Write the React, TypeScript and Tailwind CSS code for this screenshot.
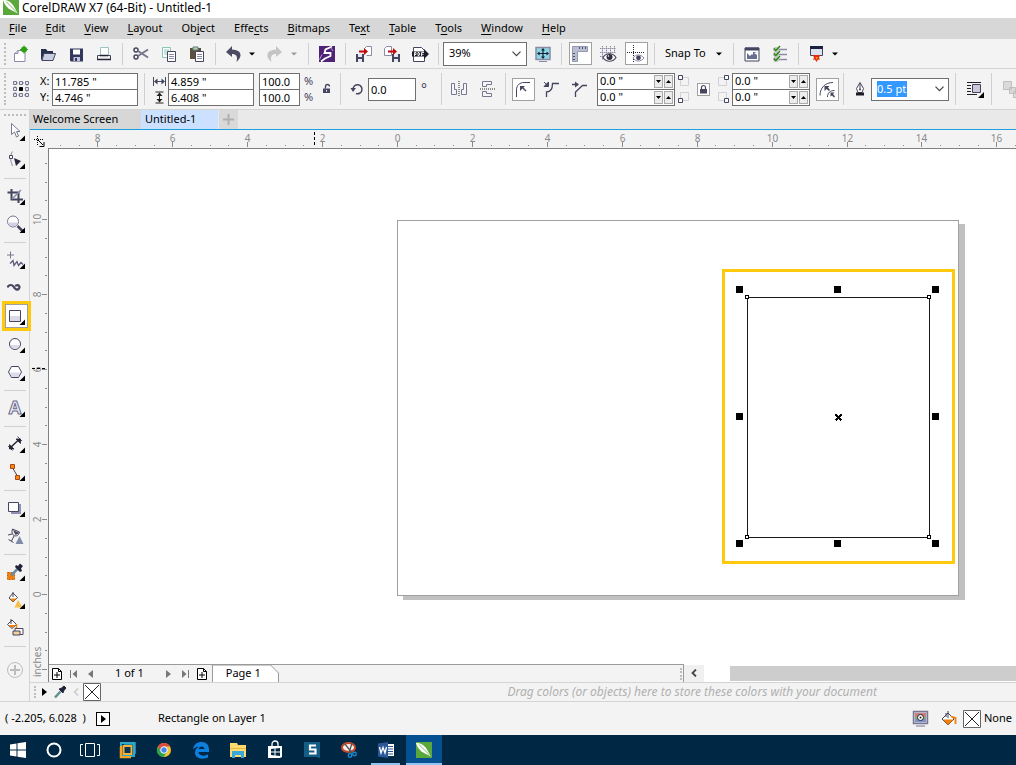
import type { ReactNode } from 'react';

const INK = '#45455f';
const GREY = '#8b8ba6';
const LIGHT = '#d9d9e6';

function Svg({ size = 20, children }: { size?: number; children: ReactNode }) {
  return (
    <svg width={size} height={size} viewBox={`0 0 ${size} ${size}`} fill="none" className="shrink-0 overflow-visible" aria-hidden="true">
      {children}
    </svg>
  );
}

function Btn({ label, framed, children }: { label: string; framed?: boolean; children: ReactNode }) {
  return (
    <button type="button" aria-label={label} className="flex h-7 w-7 shrink-0 items-center justify-center">
      {framed ? (
        <span className="flex h-[23px] w-[23px] items-center justify-center border border-[#a0a0a0] bg-white">{children}</span>
      ) : children}
    </button>
  );
}

function Caret({ color = '#000', label }: { color?: string; label: string }) {
  return (
    <button type="button" aria-label={label} className="flex h-7 w-2 shrink-0 items-center justify-center">
      <svg width="6" height="4" viewBox="0 0 6 4" className="shrink-0"><path d="M0 0.5h6L3 3.5z" fill={color} /></svg>
    </button>
  );
}

const Sep = () => <div className="mx-1 h-[22px] w-px shrink-0 bg-[#d0d0d0]" />;
const TallSep = () => <div className="h-8 w-px shrink-0 bg-[#d0d0d0]" />;
const ToolSep = () => <div className="mt-1 mb-[3px] ml-1 h-px w-[22px] shrink-0 bg-[#d0d0d0]" />;
const Grip = ({ h }: { h: string }) => <div className={`w-0.5 shrink-0 border-l-2 border-dotted border-[#bdbdbd] ${h}`} />;

function Chevron() {
  return (
    <svg width="9" height="6" viewBox="0 0 9 6" fill="none" className="pointer-events-none shrink-0">
      <path d="M0.5 0.7l4 4 4-4" stroke="#444" strokeWidth="1.2" />
    </svg>
  );
}

function Field({ label, value, width }: { label: string; value: string; width: string }) {
  return (
    <input
      aria-label={label}
      defaultValue={value}
      className={`-mt-px block h-[17px] shrink-0 border border-[#707070] bg-white px-[2px] text-[11px] leading-[15px] outline-none first:mt-0 ${width}`}
    />
  );
}

function Spinner({ label, value }: { label: string; value: string }) {
  return (
    <div className="-mt-px flex h-[17px] w-[78px] items-center border border-[#707070] bg-white first:mt-0">
      <input aria-label={label} defaultValue={value} className="h-[15px] min-w-0 flex-1 bg-transparent px-[2px] text-[11px] outline-none" />
      <button type="button" aria-label={`Decrease ${label}`} className="flex h-[13px] w-[9px] items-center justify-center border border-[#aaa] bg-[#ececec]">
        <svg width="5" height="3" viewBox="0 0 5 3" className="shrink-0"><path d="M0 0h5L2.5 3z" fill="#000" /></svg>
      </button>
      <button type="button" aria-label={`Increase ${label}`} className="mr-px ml-px flex h-[13px] w-[9px] items-center justify-center border border-[#aaa] bg-[#ececec]">
        <svg width="5" height="3" viewBox="0 0 5 3" className="shrink-0"><path d="M0 3h5L2.5 0z" fill="#000" /></svg>
      </button>
    </div>
  );
}

const CorelLogo = ({ size = 16 }: { size?: number }) => (
  <svg width={size} height={size} viewBox="0 0 16 16" className="shrink-0" aria-hidden="true">
    <path d="M0 0h16v16H0z" fill="#5aa83b" />
    <path d="M0 1C3 0.500 7 2 10 6l5 8.500L8 11C4 9 1 5 0 1z" fill="#fff" />
    <path d="M3 2.500L14 13.500" stroke="#5aa83b" strokeWidth="0.800" />
  </svg>
);

const MENUS: [string, string, string][] = [
  ['', 'F', 'ile'], ['', 'E', 'dit'], ['', 'V', 'iew'], ['', 'L', 'ayout'], ['Ob', 'j', 'ect'], ['Effe', 'c', 'ts'],
  ['', 'B', 'itmaps'], ['Te', 'x', 't'], ['', 'T', 'able'], ['T', 'o', 'ols'], ['', 'W', 'indow'], ['', 'H', 'elp'],
];

function TitleAndMenu() {
  return (
    <header>
      <div className="flex h-[18px] items-start bg-white pl-[3px]">
        <div className="-mt-px"><CorelLogo /></div>
        <h1 className="pl-[3px] text-[12px] leading-4">CorelDRAW X7 (64-Bit) - Untitled-1</h1>
      </div>
      <nav className="flex h-[21px] items-center bg-[#d7d7d7]">
        {MENUS.map(([pre, key, post]) => (
          <button key={pre + key + post} type="button" className="h-[21px] pr-[10px] pl-[9px] text-[11px]">
            {pre}<span className="underline underline-offset-2">{key}</span>{post}
          </button>
        ))}
      </nav>
    </header>
  );
}

function StandardBar() {
  return (
    <div className="flex h-[30px] items-center overflow-hidden border-b border-[#d4d4d4] pl-1">
      <Grip h="h-[22px]" />
      <Btn label="New">
        <Svg>
          <path d="M8 6.500h7v11H4.500v-8z" fill="#fff" stroke={GREY} />
          <path d="M4.500 9.500H8v-3" fill={LIGHT} stroke={GREY} />
          <circle cx="14" cy="5.500" r="3" fill="#2fa012" />
          <path d="M14 1.500v8M10 5.500h8" stroke="#2fa012" />
        </Svg>
      </Btn>
      <Btn label="Open">
        <Svg>
          <path d="M3 17V5h5l1.500 2H15v3H6z" fill="#25304d" />
          <path d="M6 9.500h11.500L15 16.500H4z" fill="#c9cfe0" stroke={INK} />
        </Svg>
      </Btn>
      <Btn label="Save">
        <Svg>
          <path d="M4 4.500h13v13H5l-1-1z" fill="#34375c" />
          <path d="M7 5.500h7v5H7z" fill="#fff" />
          <path d="M7.500 13h6.500v4H7.500z" fill="#bfc6dd" />
          <path d="M9 14h2v3H9z" fill="#34375c" />
        </Svg>
      </Btn>
      <Btn label="Print">
        <Svg>
          <path d="M6.500 3.500h8v9h-8z" fill="#fff" stroke="#9cc3c3" />
          <path d="M3.500 11.500h13v4h-13z" fill="#eee" stroke={INK} />
          <path d="M3 15.500h14M6 11.500h8" stroke="#25253a" strokeWidth="1.500" />
        </Svg>
      </Btn>
      <Sep />
      <Btn label="Cut">
        <Svg>
          <circle cx="5" cy="6" r="2" stroke={INK} strokeWidth="1.500" />
          <circle cx="5" cy="13" r="2" stroke={INK} strokeWidth="1.500" />
          <path d="M7 7l10 6.500M7 12l10-6.500" stroke="#77778c" strokeWidth="2" />
        </Svg>
      </Btn>
      <Btn label="Copy">
        <Svg>
          <path d="M3.500 3.500h8v10h-8z" fill="#fff" stroke="#8cc5b9" />
          <path d="M5 6h5M5 8h5M5 10h5" stroke="#8cc5b9" />
          <path d="M8.500 7.500h8v10h-8z" fill="#fff" stroke={INK} />
          <path d="M10 10.500h5M10 12.500h5M10 14.500h5" stroke={GREY} />
        </Svg>
      </Btn>
      <Btn label="Paste">
        <Svg>
          <path d="M3 4h11v11H3z" fill="#5d4f3d" />
          <path d="M6 3h5v3H6z" fill="#a9d2c6" stroke="#6b7f6c" />
          <path d="M8.500 7.500h8v10h-8z" fill="#fff" stroke={INK} />
          <path d="M10 10.500h5M10 12.500h5M10 14.500h5" stroke={GREY} />
        </Svg>
      </Btn>
      <Sep />
      <Btn label="Undo">
        <Svg>
          <path d="M8 2L2 8l6 5V10c4 0 6 2 4.500 8 6-5 6-12-4.500-12.500z" fill="#4b4b63" />
        </Svg>
      </Btn>
      <Caret label="Undo list" />
      <div className="w-1 shrink-0" />
      <Btn label="Redo">
        <Svg>
          <path d="M12 2l6 6-6 5V10c-4 0-6 2-4.500 8-6-5-6-12 4.500-12.500z" fill="#c4c4c4" />
        </Svg>
      </Btn>
      <div className="w-0.5 shrink-0" />
      <Caret label="Redo list" color="#999" />
      <div className="w-1.5 shrink-0" />
      <Sep />
      <Btn label="Search content">
        <Svg>
          <path d="M2 2h16v16H2z" fill="#4d2277" />
          <path d="M15 2.500L8.500 5.500 7.500 9h6v3l-5.500 2.500-4 3" stroke="#fff" strokeWidth="1.800" />
          <path d="M5 10.500l-2.500 5M14 4l2 3" stroke="#b79ad0" />
        </Svg>
      </Btn>
      <Sep />
      <Btn label="Import">
        <Svg>
          <path d="M10.500 8V4.500l2-2h5v9h-5" fill="#fff" stroke={GREY} />
          <path d="M2 10h8v8H2z" fill={INK} /><path d="M4 10h4v3H4zM4 15h4v3H4z" fill="#e8e8f3" />
          <path d="M5 6.500h5V4l4 3.500-4 3.500V8.500H5z" fill="#c00a0a" />
        </Svg>
      </Btn>
      <Btn label="Export">
        <Svg>
          <path d="M2.500 11.500v-7l2-2h5v9z" fill="#fff" stroke={GREY} />
          <path d="M10 10h8v8h-8z" fill={INK} /><path d="M12 10h4v3h-4zM12 15h4v3h-4z" fill="#e8e8f3" />
          <path d="M6 6.500h5V4l4 3.500-4 3.500V8.500H6z" fill="#c00a0a" />
        </Svg>
      </Btn>
      <Btn label="Publish to PDF">
        <Svg>
          <path d="M3.500 17.500v-14h8l3 3v11z" fill="#fff" stroke={INK} />
          <path d="M2 7.500h12V5l5 5-5 5v-2.500H2z" fill="#1d1d26" />
          <path d="M4.500 12V8.500h1.500v2H4.500M8 8.500v3h1l.8-1.500L9 8.500zM11.500 12V8.500H14M11.500 10.300h2" stroke="#fff" strokeWidth="0.900" />
        </Svg>
      </Btn>
      <Sep />
      <div className="flex h-6 w-[84px] shrink-0 items-center border border-[#707070] bg-white pr-[5px]">
        <select aria-label="Zoom levels" className="h-[22px] min-w-0 flex-1 appearance-none bg-transparent pl-[5px] text-[11px] outline-none">
          <option>39%</option>
        </select>
        <Chevron />
      </div>
      <div className="w-0.5 shrink-0" />
      <Btn label="Full-screen preview">
        <Svg>
          <path d="M3 3.500h14v12H3z" fill="#8fd5e8" stroke={GREY} strokeWidth="1.500" />
          <path d="M10 5v9M5 9.500h10" stroke="#14232f" strokeWidth="1.200" />
          <path d="M8 6.500L10 4l2 2.500zM8 12.500l2 2.500 2-2.500zM6.500 7.500L4 9.500l2.500 2zM13.500 7.500l2.500 2-2.500 2z" fill="#14232f" />
          <path d="M6 17.500h8" stroke={GREY} />
        </Svg>
      </Btn>
      <Sep />
      <Btn label="Show rulers" framed>
        <Svg size={18}>
          <path d="M1.500 1.500h15v5h-10v10h-5z" fill="#b9bfd0" stroke="#9299b0" />
          <path d="M8.500 2v2M11.500 2v2M14.500 2v2M2 8.500h2M2 11.500h2M2 14.500h2" stroke="#4f566f" />
        </Svg>
      </Btn>
      <Btn label="Show grid">
        <Svg>
          <path d="M4.500 2v14M8.500 2v14M12.500 2v10M16.500 2v6M2 4.500h16M2 8.500h16M2 12.500h6" stroke={GREY} strokeDasharray="1.500 0.500" />
          <path d="M5 13.500c3-5 10-5 13 0-3 5-10 5-13 0z" fill="#fff" stroke={INK} strokeWidth="1.200" />
          <circle cx="11.500" cy="13" r="3" fill="#2d2d3b" /><circle cx="10.500" cy="12" r="0.800" fill="#fff" />
        </Svg>
      </Btn>
      <Btn label="Show guidelines" framed>
        <Svg size={18}>
          <path d="M6.500 0v18M0 7.500h18" stroke="#222" strokeDasharray="1 1" />
          <path d="M6 13c2.500-4 8-4 11 0-3 4-8.500 4-11 0z" fill="#fff" stroke={GREY} />
          <circle cx="11.500" cy="12.800" r="2.400" fill={INK} />
        </Svg>
      </Btn>
      <Sep />
      <button type="button" className="shrink-0 px-[6px] text-[11px]">Snap To</button>
      <div className="w-[3px] shrink-0" />
      <Caret label="Snap options" />
      <div className="w-[6px] shrink-0" />
      <Sep />
      <Btn label="Welcome screen">
        <Svg>
          <path d="M3 4h14v13H3z" fill="#fff" stroke={INK} /><path d="M3 3.500h14v3H3z" fill={INK} />
          <path d="M5 9l3 3 2-2 1 1V8h4v7H5z" fill="#6a6f92" /><path d="M12 9l3-1v3z" fill="#fff" />
        </Svg>
      </Btn>
      <Btn label="Options">
        <Svg>
          <path d="M9 5.500h8M9 10.500h8M9 15.500h8" stroke={GREY} strokeWidth="1.400" />
          <path d="M4 4h4v3H4zM4 9h4v3H4zM4 14h4v3H4z" fill="#fff" stroke="#9aa09a" />
          <path d="M4 4.500l1.800 2L10 2M4 9.500l1.800 2L10 7M4 14.500l1.800 2L10 12" stroke="#27830c" strokeWidth="1.400" />
        </Svg>
      </Btn>
      <Sep />
      <Btn label="Application launcher">
        <Svg>
          <path d="M3.500 2.500h12v9h-12z" fill="#dde3ee" stroke={INK} /><path d="M3 2h13v3H3z" fill="#1c2140" />
          <path d="M6 11h7l-1 3 1 2-2-.5L9.500 18 8 15.500 6 16l1-2z" fill="#e32a0e" /><path d="M8.500 13h2l-.8 3z" fill="#ffb300" />
        </Svg>
      </Btn>
      <Caret label="Launcher list" />
    </div>
  );
}

const CornerBox = ({ x, y }: { x: number; y: number }) => (
  <Svg size={13}>
    <path d="M2.500 2.500h8v8h-8z" stroke="#d0d0d6" />
    <path d={`M${x} ${y}h4v4h-4z`} fill="#fff" stroke={INK} />
  </Svg>
);

function PropertyBar() {
  return (
    <div className="flex h-[41px] items-center overflow-hidden border-b border-[#d4d4d4] pl-1">
      <Grip h="h-8" />
      <div className="ml-[5px] flex shrink-0">
        <Svg>
          <path d="M4 4h12v12H4z" stroke={GREY} strokeDasharray="1 1" />
          {[2.5, 8.5, 14.500].map((y) => [2.5, 8.5, 14.500].map((x) => (
            <path key={`${x}-${y}`} d={`M${x} ${y}h3v3h-3z`} fill={x === 8.5 && y === 8.5 ? '#000' : '#e6e6ee'} stroke={x === 8.5 && y === 8.5 ? '#000' : '#77778f'} />
          )))}
        </Svg>
      </div>
      <div className="ml-[9px] w-3 shrink-0 text-[11px] leading-4">
        <div>X:</div>
        <div>Y:</div>
      </div>
      <div className="shrink-0">
        <Field label="X position" value={'11.785 "'} width="w-[86px]" />
        <Field label="Y position" value={'4.746 "'} width="w-[86px]" />
      </div>
      <div className="w-[6px] shrink-0" />
      <TallSep />
      <div className="ml-2 flex w-[15px] shrink-0 flex-col gap-[3px]">
        <Svg size={13}>
          <path d="M0.500 2v9M12.500 2v9M2 6.500h9" stroke={INK} />
          <path d="M1 6.500L4.500 3.500v6zM12 6.500L8.500 3.500v6z" fill={INK} />
        </Svg>
        <Svg size={13}>
          <path d="M2.500 1h8M2.500 12h8M6.500 2v9" stroke="#222" />
          <path d="M6.500 1.500L3.500 5h6zM6.500 11.500L3.500 8h6z" fill="#222" />
        </Svg>
      </div>
      <div className="shrink-0">
        <Field label="Object width" value={'4.859 "'} width="w-[86px]" />
        <Field label="Object height" value={'6.408 "'} width="w-[86px]" />
      </div>
      <div className="ml-[5px] shrink-0">
        <Field label="Horizontal scale" value="100.0" width="w-[41px]" />
        <Field label="Vertical scale" value="100.0" width="w-[41px]" />
      </div>
      <div className="ml-1 w-[14px] shrink-0 text-[11px] leading-4 text-[#45455f]">
        <div>%</div>
        <div>%</div>
      </div>
      <button type="button" aria-label="Lock ratio" className="flex w-[18px] shrink-0 justify-center">
        <Svg size={10}>
          <path d="M1 4.500h7V9H1z" fill={INK} />
          <path d="M3.500 4.500V2.500a2 2 0 0 1 4 0" stroke={INK} strokeWidth="1.300" />
          <path d="M4 6h1v1.500H4z" fill="#fff" />
        </Svg>
      </button>
      <div className="w-1 shrink-0" />
      <TallSep />
      <label htmlFor="angle" aria-label="Angle of rotation" className="mr-1 ml-[9px] shrink-0">
        <Svg size={14}>
          <path d="M3 7a4.500 4.500 0 1 1 3 4.500" stroke={INK} strokeWidth="1.500" />
          <path d="M0.500 6h5.500L3 10z" fill={INK} />
        </Svg>
      </label>
      <input id="angle" defaultValue="0.0" className="h-[23px] w-12 shrink-0 border border-[#707070] bg-white px-[2px] text-[11px] outline-none" />
      <span className="ml-[5px] w-5 shrink-0 text-[14px] leading-5 text-[#45455f]">°</span>
      <TallSep />
      <div className="w-[3px] shrink-0" />
      <Btn label="Mirror horizontally">
        <Svg>
          <path d="M2.500 4.500h3v6h2v5h-5zM17.500 4.500h-3v6h-2v5h5z" fill="#f6f6fa" stroke="#77778f" />
          <path d="M10 2v16" stroke="#222" strokeDasharray="1 1" />
        </Svg>
      </Btn>
      <Btn label="Mirror vertically">
        <Svg>
          <path d="M5.500 2.500h9v3h-5v2h-4zM5.500 17.500h9v-3h-5v-2h-4z" fill="#f6f6fa" stroke="#77778f" />
          <path d="M3 10h15" stroke="#222" strokeDasharray="1 1" />
        </Svg>
      </Btn>
      <div className="w-1 shrink-0" />
      <TallSep />
      <div className="w-[3px] shrink-0" />
      <Btn label="Round corner" framed>
        <Svg size={18}>
          <path d="M2.500 17V10C2.500 5 6 2.500 10 2.500h6" stroke={INK} />
          <path d="M6 6h5L9.500 7.500l3 3-1 1-3-3L6 11z" fill={INK} />
        </Svg>
      </Btn>
      <Btn label="Scalloped corner">
        <Svg>
          <path d="M5.500 18v-5c4 0 6-2 6-8.500H18" stroke={INK} strokeWidth="1.300" />
          <path d="M3 3l3 3M7.500 3v4.500H3z" stroke={INK} fill={INK} />
        </Svg>
      </Btn>
      <Btn label="Chamfered corner">
        <Svg>
          <path d="M6.500 18v-5l7-6.500H18M3 5.500h6" stroke={INK} strokeWidth="1.300" />
          <path d="M6 2.500l4 3-4 3z" fill={INK} />
        </Svg>
      </Btn>
      <div className="w-1 shrink-0" />
      <div className="shrink-0">
        <Spinner label="Top left radius" value={'0.0 "'} />
        <Spinner label="Bottom left radius" value={'0.0 "'} />
      </div>
      <div className="ml-[3px] flex shrink-0 flex-col gap-[2px]">
        <CornerBox x={0.5} y={0.5} />
        <CornerBox x={0.5} y={8.500} />
      </div>
      <button type="button" aria-label="Edit corners together" className="ml-[6px] flex h-[13px] w-[13px] shrink-0 items-center justify-center border border-[#a0a0a0] bg-white">
        <Svg size={9}>
          <path d="M1 4h7v4.500H1z" fill={INK} />
          <path d="M2.500 4V2.500a2 2 0 0 1 4 0V4" stroke={INK} strokeWidth="1.200" />
        </Svg>
      </button>
      <div className="ml-[6px] flex shrink-0 flex-col gap-[2px]">
        <CornerBox x={8.500} y={0.5} />
        <CornerBox x={8.500} y={8.500} />
      </div>
      <div className="ml-[3px] shrink-0">
        <Spinner label="Top right radius" value={'0.0 "'} />
        <Spinner label="Bottom right radius" value={'0.0 "'} />
      </div>
      <div className="w-[3px] shrink-0" />
      <Btn label="Relative corner scaling" framed>
        <Svg size={18}>
          <path d="M2 15.500C2 8 7 2.500 15 2.500M9.500 17c0-4 2.500-6.500 7-6.500" stroke={INK} />
          <path d="M6.500 6h5L10 7.500 12 10l-1 1-2.500-2L6.500 11zM12.500 12.500h4L15 14l2 2.500-1 1-2-2-1.500 1z" fill={INK} />
        </Svg>
      </Btn>
      <div className="w-0.5 shrink-0" />
      <TallSep />
      <label htmlFor="outline" aria-label="Outline width" className="mr-1 ml-[9px] shrink-0">
        <Svg size={14}>
          <path d="M7 0.500L3.500 6.500l1.500 4h4l1.500-4z" fill="#fff" stroke={INK} />
          <path d="M7 1v6" stroke={INK} /><circle cx="7" cy="7.500" r="1" fill={INK} />
          <path d="M3 10.500h8v3H3z" fill="#1d1d26" />
        </Svg>
      </label>
      <div className="flex h-[23px] w-[78px] shrink-0 items-center justify-between border border-[#707070] bg-white pr-1 pl-[5px]">
        <select id="outline" className="h-4 appearance-none bg-[#3399ff] text-[11px] leading-4 text-white outline-none">
          <option>0.5 pt</option>
        </select>
        <Chevron />
      </div>
      <div className="w-[6px] shrink-0" />
      <TallSep />
      <div className="w-[5px] shrink-0" />
      <Btn label="Wrap text">
        <Svg>
          <path d="M2 3.500h14M2 6.500h4M2 9.500h4M2 12.500h4M2 15.500h10" stroke="#222" />
          <path d="M7.500 5.500h8v8h-8z" fill="#c9c9dc" stroke={INK} />
          <path d="M19 13v6h-6z" fill="#000" />
        </Svg>
      </Btn>
      <div className="w-0.5 shrink-0" />
      <TallSep />
      <div className="w-[6px] shrink-0" />
      <Btn label="To front of page">
        <Svg>
          <path d="M1.500 2.500h8v8h-8zM7.500 8.500h6v6h-6zM11.500 12.500h6v6h-6z" fill="#dadada" stroke="#bfbfbf" />
        </Svg>
      </Btn>
    </div>
  );
}

const FLYOUT = <path d="M20 13.500v5.500h-5.500z" fill="#000" />;

type Tool = { label: string; icon: ReactNode; active?: boolean };

const TOOL_GROUPS: Tool[][] = [
  [
    { label: 'Pick tool', icon: <><path d="M6.500 1.500v11l3-2.500 2 5 2-1-2-4.500h3.500z" fill="#fff" stroke="#77778f" />{FLYOUT}</> },
    { label: 'Shape tool', icon: <><path d="M7.500 1.500C5 5 5 10 7.500 16" stroke={GREY} /><path d="M4.500 5.500h3v3h-3z" fill="#fff" stroke={INK} /><path d="M9 8l7 3-5 5z" fill="#25253a" />{FLYOUT}</> },
  ],
  [
    { label: 'Crop tool', icon: <><path d="M6.500 3v10.500H18M2.500 6.500h11V17" stroke={INK} strokeWidth="2" /><path d="M7 13L16 4" stroke={GREY} strokeWidth="1.500" />{FLYOUT}</> },
    { label: 'Zoom tool', icon: <><circle cx="8" cy="7.500" r="5.500" fill="#fff" stroke="#77778f" /><path d="M3 8.500h10c0 5-10 5-10 0z" fill="#cfd2e4" /><path d="M12.500 12l5 5" stroke={INK} strokeWidth="2.500" />{FLYOUT}</> },
  ],
  [
    { label: 'Freehand tool', icon: <><path d="M5.500 1.500v7M2 5h7" stroke="#77778f" /><path d="M5 13.500l3-3 1 5 3-4 1.500 4 2.500-3 2 2" stroke="#5c5c7c" strokeWidth="1.300" />{FLYOUT}</> },
    { label: 'Artistic media', icon: <path d="M3 8.500c1.500-2 4-2 5.500 0 1.500 3 4 4 5.500 2s-.5-4-3-3" stroke={INK} strokeWidth="2.200" strokeLinecap="round" /> },
    { label: 'Rectangle tool', active: true, icon: <><path d="M4.500 4.500h11v11h-11z" fill="#fff" stroke={INK} /><path d="M5 10h10v5H5z" fill="#d9dbe8" />{FLYOUT}</> },
    { label: 'Ellipse tool', icon: <><circle cx="10" cy="10" r="5.500" fill="#fff" stroke={INK} /><path d="M5.200 11h9.600c-1 4.500-8.600 4.500-9.600 0z" fill="#d9dbe8" />{FLYOUT}</> },
    { label: 'Polygon tool', icon: <><path d="M6.500 4.500h7l3 5.500-3 5.500h-7l-3-5.500z" fill="#fff" stroke={INK} /><path d="M4.500 10.500h11l-2.500 4.500H7z" fill="#d9dbe8" />{FLYOUT}</> },
  ],
  [
    { label: 'Text tool', icon: <><text x="10" y="16" textAnchor="middle" fontSize="18" fontWeight="700" fill="#eef" stroke="#6c6c86" fontFamily="Noto Sans, sans-serif">A</text>{FLYOUT}</> },
  ],
  [
    { label: 'Dimension tool', icon: <><path d="M5 14L14 5.500" stroke="#222235" strokeWidth="1.500" /><path d="M4.500 10.500v4.500H9zM11 5h4.500v4.500zM12.500 2.500l4.500 4.500M3 12l4.500 4.500" fill="#222235" stroke="#222235" strokeWidth="0.800" />{FLYOUT}</> },
    { label: 'Connector tool', icon: <><path d="M7 5l6 10" stroke={INK} /><path d="M5.500 2.500h4v4h-4zM10.500 13.500h4v4h-4z" fill="#f58a07" stroke="#b1441c" />{FLYOUT}</> },
  ],
  [
    { label: 'Drop shadow tool', icon: <><path d="M6 6h10v10H6z" fill="#8f8fb0" /><path d="M3.500 4.500h10v9h-10z" fill="#fff" stroke={INK} />{FLYOUT}</> },
    { label: 'Transparency tool', icon: <><path d="M7.500 3l7 3c-1 4-3.500 4.500-5.500 3.500S6.500 6 7.500 3zM9 10l-2.500 5M3.500 13.500l5 3M3 9l4-1" stroke={INK} /><path d="M8 4l6.500 3-4 2z" fill={INK} /><path d="M14.500 10l4 8h-8z" fill="#7d8aa8" /></> },
  ],
  [
    { label: 'Color eyedropper', icon: <><path d="M2.500 10.500h7v7h-7z" fill="#f0800a" stroke="#c85c08" strokeDasharray="2 1" /><path d="M6 13.500L12.500 7" stroke="#6d8aa0" strokeWidth="2.500" /><path d="M11 3l2 1 2-2.500 3 2.500-2 2.500L17 9l-2 1-5-5z" fill="#22223a" />{FLYOUT}</> },
    { label: 'Interactive fill', icon: <><path d="M8 3l4.500 4.500L8 12 4 8z" fill="#fff" stroke={INK} /><path d="M5 8.500h6.500L8 12z" fill="#f0800a" /><path d="M8 2v5" stroke={INK} /><path d="M13 10l4.500 7.500h-8z" fill="#f5bf4d" />{FLYOUT}</> },
    { label: 'Smart fill', icon: <><path d="M7 2l4.500 4.500L7 10.500 2.500 6.500z" fill="#fff" stroke={INK} /><path d="M3.500 7h7L7 10z" fill="#f0800a" /><path d="M6 1v5" stroke={INK} /><path d="M11.500 6v6" stroke="#f0800a" strokeWidth="1.500" /><path d="M10 10.500h8v6h-8z" fill="#fff" stroke={INK} /><path d="M8 13h7v4H8z" fill="#f5d19f" stroke={INK} /></> },
  ],
];

function Toolbox() {
  return (
    <aside className="flex w-[30px] shrink-0 flex-col border-r border-[#d4d4d4]">
      <div className="mt-1 mb-0.5 ml-1 h-0.5 w-[22px] border-t-2 border-dotted border-[#bdbdbd]" />
      {TOOL_GROUPS.map((group, i) => (
        <div key={i} className="flex flex-col">
          {group.map((tool) => (
            <button key={tool.label} type="button" aria-label={tool.label} className="relative flex h-7 w-full items-center justify-center">
              {tool.active && <span className="absolute top-0.5 right-px bottom-0.5 left-[5px] border border-[#a0a0a0] bg-white outline-[3px] outline-[#ffc90e]" />}
              <span className="relative"><Svg>{tool.icon}</Svg></span>
            </button>
          ))}
          <ToolSep />
        </div>
      ))}
      <button type="button" aria-label="Quick customize" className="flex h-10 w-full items-center justify-center">
        <Svg>
          <circle cx="10" cy="10" r="7.500" stroke="#bcbcbc" /><path d="M10 5v10M5 10h10" stroke="#bcbcbc" strokeWidth="2" />
        </Svg>
      </button>
    </aside>
  );
}

const STEP = 18.73;
const V_STEP = 18.75;

function TopRuler() {
  const zero = 348.5;
  const ticks = Array.from({ length: 52 }, (_, i) => i - 18);
  return (
    <svg className="block h-[18px] min-w-0 flex-1" aria-label="Horizontal ruler">
      {ticks.map((n) => {
        const x = Math.round(zero + n * STEP - 0.5) + 0.5;
        const major = n % 4 === 0;
        return (
          <g key={n}>
            <path d={`M${x} ${major ? 12 : 15}V${major ? 17 : 16}`} stroke="#8a8a8a" />
            {major && <text x={x} y={12} textAnchor="middle" fontSize="10" fill="#8a8a8a">{Math.abs(n / 2)}</text>}
          </g>
        );
      })}
      <path d="M265.500 2v15" stroke="#000" strokeDasharray="3 2" />
    </svg>
  );
}

function SideRuler() {
  const zero = 446;
  const ticks = Array.from({ length: 28 }, (_, i) => i - 4);
  return (
    <svg className="block w-[18px] flex-1" aria-label="Vertical ruler">
      {ticks.map((n) => {
        const y = Math.round(zero - n * V_STEP) + 0.5;
        const major = n % 4 === 0;
        return (
          <g key={n}>
            <path d={`M${major ? 12 : 15} ${y}H17`} stroke="#8a8a8a" />
            {major && n >= 0 && (
              <text transform={`translate(11 ${y}) rotate(-90)`} textAnchor="middle" fontSize="10" fill="#8a8a8a">{n / 2}</text>
            )}
          </g>
        );
      })}
      <text transform="translate(11 529) rotate(-90)" fontSize="10" fill="#8a8a8a">inches</text>
      <path d="M2 220.500h15" stroke="#000" strokeDasharray="3 2" />
    </svg>
  );
}

function DrawingWindow() {
  return (
    <div className="relative min-h-[515px] flex-1 overflow-hidden bg-white">
      <div className="absolute top-[71px] left-[348px] h-[376px] w-[562px] border border-[#a0a0a0] bg-white shadow-[6px_4px_0_#c0c0c0]" />
      <div className="absolute top-[120px] left-[673px] h-[295px] w-[233px] border-[3px] border-[#ffc90e]">
        <svg width="227" height="289" viewBox="0 0 227 289" fill="none" shapeRendering="crispEdges">
          <path d="M22.500 25.500h182v240h-182z" stroke="#1a1a1a" />
          {[11, 109, 207].map((x) => [14, 141, 268].map((y) => (
            x === 109 && y === 141 ? null : <rect key={`${x}-${y}`} x={x} y={y} width="7" height="7" fill="#000" />
          )))}
          {[21, 203].map((x) => [24, 264].map((y) => (
            <rect key={`${x}-${y}`} x={x - 0.5} y={y - 0.5} width="3" height="3" fill="#fff" stroke="#000" />
          )))}
          <path d="M110.500 142.500l6 6M116.500 142.500l-6 6" stroke="#000" strokeWidth="2" />
        </svg>
      </div>
    </div>
  );
}

const AddPage = ({ label }: { label: string }) => (
  <button type="button" aria-label={label} className="flex h-[17px] w-4 shrink-0 items-center justify-center">
    <Svg size={12}>
      <path d="M1.500 0.500h6l3 3v8h-9z" fill="#fff" stroke="#000" /><path d="M7.500 0.500v3h3M6 4v6M3 7h6" stroke="#000" />
    </Svg>
  </button>
);

function NavBtn({ label, d }: { label: string; d: string }) {
  return (
    <button type="button" aria-label={label} className="flex h-[17px] w-[17px] shrink-0 items-center justify-center">
      <Svg size={8}><path d={d} fill="#777" /></Svg>
    </button>
  );
}

function PageNavigator() {
  return (
    <div className="flex h-[18px] text-[11px]">
      <div className="flex min-w-0 flex-1 items-center border-t border-r border-[#9a9a9a]">
        <AddPage label="Add page before" />
        <NavBtn label="First page" d="M0 0h1v8H0zM7 0v8L2.500 4z" />
        <NavBtn label="Previous page" d="M6 0v8L1 4z" />
        <span className="mx-4 shrink-0">1 of 1</span>
        <NavBtn label="Next page" d="M2 0v8l5-4z" />
        <NavBtn label="Last page" d="M7 0h1v8H7zM1 0v8l4.500-4z" />
        <AddPage label="Add page after" />
        <button type="button" className="relative ml-0.5 flex h-[17px] w-[67px] shrink-0 items-center pl-[14px]">
          <svg viewBox="0 0 67 17" className="absolute inset-0 h-full w-full" fill="none">
            <path d="M0.500 17V0H58.500L66.500 8V17" fill="#fff" stroke="#9a9a9a" />
          </svg>
          <span className="relative">Page 1</span>
        </button>
        <div className="ml-auto h-3 w-[3px] border-l-2 border-dotted border-[#bdbdbd]" />
      </div>
      <div className="flex w-[332px] shrink-0 items-center bg-white">
        <button type="button" aria-label="Scroll left" className="flex h-[17px] w-[20px] items-center justify-center bg-[#f0f0f0]">
          <svg width="6" height="8" viewBox="0 0 6 8" fill="none"><path d="M5 0.500L1.500 4 5 7.500" stroke="#444" strokeWidth="1.800" /></svg>
        </button>
        <div className="ml-[26px] h-[15px] flex-1 bg-[#cdcdcd]" />
      </div>
    </div>
  );
}

const NoColor = () => (
  <svg width="18" height="18" viewBox="0 0 18 18" fill="none" className="shrink-0" aria-hidden="true">
    <path d="M0.500 0.500h17v17H0.500z" fill="#fff" stroke="#666" />
    <path d="M2 2l14 14M16 2L2 16" stroke="#222" />
  </svg>
);

function DocumentPalette() {
  return (
    <div className="flex h-[19px] items-center border-t border-[#d4d4d4] pl-1">
      <Grip h="h-3" />
      <button type="button" aria-label="Palette menu" className="flex w-4 shrink-0 items-center justify-center">
        <svg width="5" height="8" viewBox="0 0 5 8"><path d="M0 0v8l5-4z" fill="#000" /></svg>
      </button>
      <button type="button" aria-label="Pick color" className="flex w-4 shrink-0 items-center justify-center">
        <Svg size={14}>
          <path d="M2 12.500L7.500 6.500" stroke="#5f9090" strokeWidth="2.500" />
          <path d="M6 4l2-.5L11 1l2 2-2.500 3L10 8z" fill="#22223a" stroke="#22223a" />
        </Svg>
      </button>
      <button type="button" aria-label="Scroll palette" className="flex w-[15px] shrink-0 items-center justify-center">
        <svg width="6" height="8" viewBox="0 0 6 8" fill="none"><path d="M5 0.500L1.500 4 5 7.500" stroke="#ccc" strokeWidth="1.600" /></svg>
      </button>
      <NoColor />
      <p className="ml-auto truncate pr-[139px] text-[12px] leading-4 text-[#b0b0b0] italic">
        Drag colors (or objects) here to store these colors with your document
      </p>
    </div>
  );
}

function StatusBar() {
  return (
    <footer className="flex h-[33px] items-center pr-1 pl-[5px] text-[11px]">
      <span className="w-[91px] whitespace-pre">{'( -2.205, 6.028  )'}</span>
      <button type="button" aria-label="Status options" className="flex h-[14px] w-[14px] items-center justify-center border border-black bg-white">
        <svg width="5" height="8" viewBox="0 0 5 8"><path d="M0 0v8l5-4z" fill="#000" /></svg>
      </button>
      <span className="ml-12">Rectangle on Layer 1</span>
      <div className="ml-auto flex items-center">
        <Btn label="Color proofing">
          <Svg size={18}>
            <path d="M1.500 1.500h14v12h-14z" fill="#ccd" stroke="#77778f" strokeWidth="1.500" />
            <path d="M3 3h11v4H3z" fill="#c77f7f" /><path d="M3 7h11v2H3z" fill="#7fae7f" /><path d="M3 9h11v3H3z" fill="#7f94cc" />
            <circle cx="8.500" cy="7.500" r="3" fill="#fff" stroke="#222" /><circle cx="8.500" cy="7.500" r="1" fill="#222" />
            <path d="M4 16h9" stroke="#77778f" />
          </Svg>
        </Btn>
        <Btn label="Fill color">
          <Svg size={18}>
            <path d="M8 3l6 6-6 6-6-6z" fill="#fff" stroke={INK} /><path d="M3 9.500h10.500L8 15z" fill="#f0800a" />
            <path d="M8 1v7M6 3v4" stroke={INK} /><path d="M11 6.500l4.500 1.500v6" stroke="#f0800a" strokeWidth="1.800" />
          </Svg>
        </Btn>
        <NoColor />
        <span className="pl-[3px]">None</span>
      </div>
    </footer>
  );
}

const TASKS: { label: string; icon: ReactNode; running?: boolean }[] = [
  { label: 'Virtual machine', icon: <><path d="M7 3.500h10.500v10.500" stroke="#2aa7c9" strokeWidth="2.500" /><path d="M4 7v10h10" stroke="#f2a624" strokeWidth="2.500" /><path d="M4 3h13v13H4z" stroke="#2aa7c9" strokeWidth="2" /><path d="M6.500 6h8v8h-8z" fill="#0d3351" stroke="#f2b23c" strokeWidth="2" /><path d="M4 6v11h10" stroke="#f2a624" strokeWidth="2" /></> },
  { label: 'Chrome', icon: <><circle cx="10" cy="10" r="7" fill="#f2c230" /><path d="M3.900 6.500A7 7 0 0 1 16.100 6.500H10L7 11.700z" fill="#dd4b3e" /><path d="M3.900 6.500A7 7 0 0 0 9.500 17l3.500-5.300-6 0z" fill="#2ba24c" /><circle cx="10" cy="10" r="3.300" fill="#4285f4" stroke="#fff" /></> },
  { label: 'Edge', icon: <path d="M2 9.500C2.500 4.500 6 2 10.500 2 15.500 2 18 5.500 18 9.500V12H7.500c.2 4 6 4.500 9.500 2.500v3C11 20 4 18.500 4 12.500 4 9.500 6 7.500 8 6.500c-2.500.2-4.500 1.300-6 3zM7.700 9h5.800c0-3.500-5.300-3.500-5.800 0z" fill="#0c80e0" /> },
  { label: 'File Explorer', icon: <><path d="M2 3h7l1 2h8v12H2z" fill="#ffda70" /><path d="M2 8h16v1H2z" fill="#e9b63f" /><path d="M4 11h12v7h-3v-3H7v3H4z" fill="#39a9dc" /></> },
  { label: 'Store', icon: <><path d="M7 6V4a3 3 0 0 1 6 0v2" stroke="#fff" strokeWidth="1.300" /><path d="M3 6h14v11l-2 1H3z" fill="#fff" /><path d="M6 9l3.500-.5v3H6zM10.500 8.500L15 8v3.500h-4.500zM6 12.500h3.500v3L6 15zM10.500 12.500H15v3.500l-4.500-.5z" fill="#002744" /></> },
  { label: 'Snagit', icon: <><path d="M2 2h16v16l-4-1H2z" fill="#145d84" /><path d="M14 5.500H8v4h5.500v4H7" stroke="#fff" strokeWidth="2.200" /></> },
  { label: 'Snipping Tool', icon: <><ellipse cx="9.500" cy="7.500" rx="6.500" ry="4.500" fill="#f6eeee" stroke="#c8492c" strokeWidth="2" /><path d="M6 4l7 9M13 3l-3 10" stroke="#555" strokeWidth="1.300" /><circle cx="11" cy="15.500" r="1.800" stroke="#1e90d8" strokeWidth="1.300" /><circle cx="15.500" cy="14" r="1.800" stroke="#1e90d8" strokeWidth="1.300" /></> },
  { label: 'Word', running: true, icon: <><path d="M10 4h8v12h-8z" fill="#fff" /><path d="M12 6.500h5M12 9h5M12 11.500h5M12 14h5" stroke="#2b579a" /><path d="M2 3.500L12 2v16L2 16.500z" fill="#2b579a" /><path d="M3.500 7l1.500 6 2-5.500 2 5.500 1.500-6" stroke="#fff" strokeWidth="1.300" /></> },
];

function Taskbar() {
  return (
    <nav aria-label="Taskbar" className="flex h-[30px] shrink-0 bg-[#002744]">
      <button type="button" aria-label="Start" className="flex w-9 items-center justify-center">
        <Svg><path d="M2 4.500l6.500-1v6H2zM9.500 3.300L18 2v7.500H9.500zM2 10.500h6.500v6l-6.500-1zM9.500 10.500H18V18l-8.500-1.300z" fill="#fff" /></Svg>
      </button>
      <button type="button" aria-label="Search" className="flex w-9 items-center justify-center">
        <Svg><circle cx="10" cy="10" r="6.500" stroke="#fff" strokeWidth="2" /></Svg>
      </button>
      <button type="button" aria-label="Task view" className="flex w-9 items-center justify-center">
        <Svg><path d="M5.500 3.500h9v13h-9zM3 4.500H0.500v11H3M17 4.500h2.500v11H17" stroke="#fff" /></Svg>
      </button>
      {TASKS.map((task) => (
        <button key={task.label} type="button" aria-label={task.label} className="relative flex w-[37px] items-center justify-center">
          <Svg>{task.icon}</Svg>
          {task.running && <span className="absolute inset-x-1 bottom-0 h-0.5 bg-[#93c4f0]" />}
        </button>
      ))}
      <button type="button" aria-label="CorelDRAW" className="relative ml-0.5 flex w-9 items-center justify-center bg-[#045091]">
        <CorelLogo />
        <span className="absolute inset-x-0 bottom-0 h-0.5 bg-[#93c4f0]" />
      </button>
    </nav>
  );
}

export default function App() {
  return (
    <div className="flex min-h-screen flex-col overflow-hidden bg-[#f3f3f3] font-['Noto_Sans','Open_Sans',sans-serif] text-black">
      <TitleAndMenu />
      <StandardBar />
      <PropertyBar />
      <main className="flex flex-1">
        <Toolbox />
        <div className="flex min-w-0 flex-1 flex-col">
          <div className="flex h-5 border-b border-[#1ba1e2] bg-[#e9e9e9] text-[11px]">
            <button type="button" className="w-[111px] bg-[#d7d7d7] pl-[3px] text-left">Welcome Screen</button>
            <button type="button" className="w-[77px] bg-[#cce0ff] pl-1 text-left">Untitled-1</button>
            <button type="button" aria-label="New document" className="ml-px flex w-[19px] items-center justify-center bg-[#d9d9d9]">
              <Svg size={11}><path d="M5.500 0v11M0 5.500h11" stroke="#b0b0b0" strokeWidth="2" /></Svg>
            </button>
          </div>
          <div className="flex">
            <div className="flex h-[18px] w-[19px] shrink-0 items-end justify-center">
              <Svg size={12}>
                <path d="M3.500 0v10M0 3.500h10" stroke="#000" strokeDasharray="1 1" /><path d="M4 4l5 5M10 6v4.500H5.500" stroke="#000" />
              </Svg>
            </div>
            <TopRuler />
          </div>
          <div className="flex flex-1">
            <div className="flex w-[18px] shrink-0 flex-col"><SideRuler /></div>
            <div className="flex min-w-0 flex-1 flex-col border-t border-l border-[#808080]">
              <DrawingWindow />
              <PageNavigator />
            </div>
          </div>
          <DocumentPalette />
        </div>
      </main>
      <div className="border-t border-[#d4d4d4]" />
      <StatusBar />
      <Taskbar />
    </div>
  );
}
